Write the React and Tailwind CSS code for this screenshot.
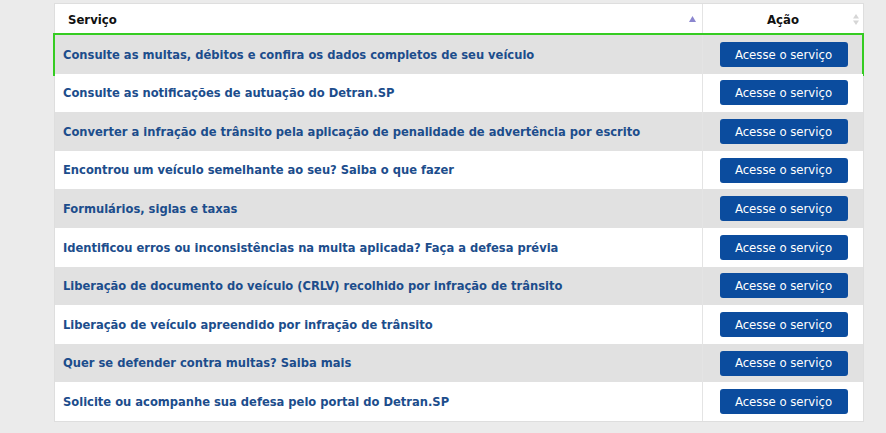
const services = [
  'Consulte as multas, débitos e confira os dados completos de seu veículo',
  'Consulte as notificações de autuação do Detran.SP',
  'Converter a infração de trânsito pela aplicação de penalidade de advertência por escrito',
  'Encontrou um veículo semelhante ao seu? Saiba o que fazer',
  'Formulários, siglas e taxas',
  'Identificou erros ou inconsistências na multa aplicada? Faça a defesa prévia',
  'Liberação de documento do veículo (CRLV) recolhido por infração de trânsito',
  'Liberação de veículo apreendido por infração de trânsito',
  'Quer se defender contra multas? Saiba mais',
  'Solicite ou acompanhe sua defesa pelo portal do Detran.SP',
];

const font = "font-['DejaVu_Sans_Condensed','DejaVu_Sans',sans-serif]";

const ServiceRow = ({ label, index }) => {
  const odd = index % 2 === 0;
  return (
    <div className={`relative flex h-[38.6px] ${odd ? 'bg-[#e1e1e1]' : 'bg-white'}`}>
      <div className="flex w-[647px] items-center pl-[8px]">
        <span className="text-[12.8px] font-bold text-[#1c4d8c]">{label}</span>
      </div>
      <div className="flex flex-1 items-center justify-center border-l border-[#e4e4e4] pl-[1px]">
        <button
          type="button"
          className="h-[25px] w-[128px] rounded-[3px] bg-[#0b4c9e] text-[13px] text-white"
        >
          Acesse o serviço
        </button>
      </div>
      {index === 0 && (
        <div className="pointer-events-none absolute -left-[2px] -right-[1px] -top-[2px] -bottom-[2px] border-2 border-[#35cc22]" />
      )}
    </div>
  );
};

export default function App() {
  return (
    <div className={`min-h-[433px] w-full bg-[#ebebeb] pt-[3px] ${font}`}>
      <div className="ml-[54px] w-[810px] border border-[#dedede] bg-white">
        <div className="flex h-[31px] bg-white">
          <div className="relative flex w-[647px] items-center pl-[13px]">
            <span className="text-[13px] font-bold text-[#111]">Serviço</span>
            <svg className="absolute right-[6px] top-[12px]" width="7" height="6" viewBox="0 0 7 6">
              <path d="M3.5 0 L7 6 L0 6 Z" fill="#8b86cf" />
            </svg>
          </div>
          <div className="relative flex flex-1 items-center justify-center border-l border-[#e4e4e4]">
            <span className="text-[13px] font-bold text-[#111]">Ação</span>
            <svg className="absolute right-[4px] top-[10px]" width="6" height="11" viewBox="0 0 6 11">
              <path d="M3 0 L6 4.5 L0 4.5 Z" fill="#d6d6d6" />
              <path d="M3 11 L6 6.5 L0 6.5 Z" fill="#d6d6d6" />
            </svg>
          </div>
        </div>
        {services.map((s, i) => (
          <ServiceRow key={s} label={s} index={i} />
        ))}
      </div>
    </div>
  );
}
